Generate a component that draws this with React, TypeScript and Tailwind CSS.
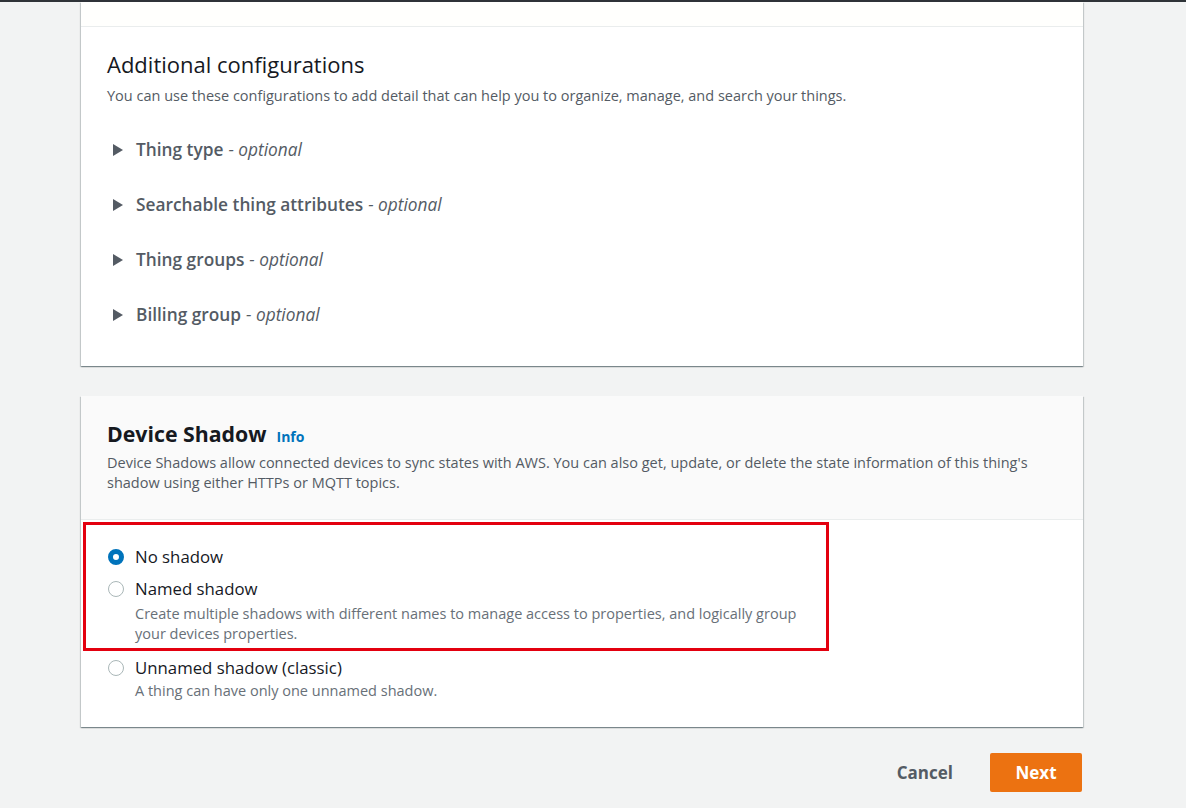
import { useState } from "react";

const expanders = [
  "Thing type",
  "Searchable thing attributes",
  "Thing groups",
  "Billing group",
];

const cardShadow =
  "shadow-[0_1px_1px_0_rgba(0,28,36,0.3),1px_1px_1px_0_rgba(0,28,36,0.15),-1px_1px_1px_0_rgba(0,28,36,0.15)]";

function Radio({ checked }: { checked: boolean }) {
  return checked ? (
    <span className="w-4 h-4 rounded-full border-[5px] border-[#0073bb] bg-white shrink-0" />
  ) : (
    <span className="w-4 h-4 rounded-full border border-[#aab7b8] bg-white shrink-0" />
  );
}

export default function App() {
  const [shadow, setShadow] = useState("none");

  return (
    <div
      className="min-h-[808px] bg-[#f2f3f3] text-[#16191f]"
      style={{ fontFamily: '"Open Sans", "Noto Sans", sans-serif' }}
    >
      <div className="h-[2px] bg-[#2f3338]" />
      <div className="ml-[81px] w-[1002px]">
        {/* Additional configurations */}
        <div className={`bg-white ${cardShadow}`}>
          <div className="h-[25px] border-b border-[#eaeded] bg-[#fffffd]" />
          <div className="px-[26px] pt-[23px] pb-[24px]">
            <h2 className="text-[22px] leading-[28px] text-[#16191f]">
              Additional configurations
            </h2>
            <p className="mt-[8px] text-[14.5px] leading-[20px] text-[#545b64]">
              You can use these configurations to add detail that can help you to organize, manage, and search your things.
            </p>
            <div className="mt-[16px]">
              {expanders.map((e) => (
                <div key={e} className="h-[55px] flex items-center">
                  <svg width="10" height="12" viewBox="0 0 10 12" className="ml-[6px] mr-[13px]">
                    <path d="M0 0 L10 6 L0 12 Z" fill="#545b64" />
                  </svg>
                  <span className="text-[17.3px] leading-[24px] font-semibold text-[#545b64]">
                    {e}
                  </span>
                  <span className="text-[17.3px] leading-[24px] italic text-[#545b64] ml-[5px]">
                    - optional
                  </span>
                </div>
              ))}
            </div>
          </div>
        </div>

        {/* Device Shadow */}
        <div className={`mt-[30px] bg-white ${cardShadow}`}>
          <div className="bg-[#fafafa] border-b border-[#eaeded] px-[26px] pt-[24px] pb-[26px]">
            <div className="flex items-baseline gap-[10px]">
              <h2 className="text-[21.3px] leading-[28px] font-bold text-[#16191f]">
                Device Shadow
              </h2>
              <a className="text-[14px] font-bold text-[#0073bb]">Info</a>
            </div>
            <p className="mt-[5px] text-[14.5px] leading-[20px] text-[#545b64] max-w-[940px]">
              Device Shadows allow connected devices to sync states with AWS. You can also get, update, or delete the state information of this thing's shadow using either HTTPs or MQTT topics.
            </p>
          </div>
          <div className="relative px-[27px] pt-[25px] pb-[26px]">
            <div className="absolute left-[2px] top-[2px] w-[746px] h-[129px] border-[3px] border-[#e3000f] pointer-events-none" />
            <label className="flex items-center gap-[11px] h-[24px]" onClick={() => setShadow("none")}>
              <Radio checked={shadow === "none"} />
              <span className="text-[16.8px] text-[#16191f]">No shadow</span>
            </label>
            <label className="flex items-center gap-[11px] h-[24px] mt-[8px]" onClick={() => setShadow("named")}>
              <Radio checked={shadow === "named"} />
              <span className="text-[16.8px] text-[#16191f]">Named shadow</span>
            </label>
            <p className="ml-[27px] mt-[3px] text-[14.5px] leading-[20px] text-[#687078] max-w-[680px]">
              Create multiple shadows with different names to manage access to properties, and logically group your devices properties.
            </p>
            <label className="flex items-center gap-[11px] h-[24px] mt-[12px]" onClick={() => setShadow("classic")}>
              <Radio checked={shadow === "classic"} />
              <span className="text-[16.8px] text-[#16191f]">Unnamed shadow (classic)</span>
            </label>
            <p className="ml-[27px] mt-[1px] text-[14.5px] leading-[20px] text-[#687078]">
              A thing can have only one unnamed shadow.
            </p>
          </div>
        </div>

        <div className="mt-[26px] flex justify-end items-center">
          <button className="h-[39px] px-[18px] text-[17px] font-bold text-[#545b64] mr-[19px]">
            Cancel
          </button>
          <button className="h-[39px] w-[92px] rounded-[2px] bg-[#ec7211] text-[17px] font-bold text-white mr-[1px]">
            Next
          </button>
        </div>
      </div>
    </div>
  );
}
